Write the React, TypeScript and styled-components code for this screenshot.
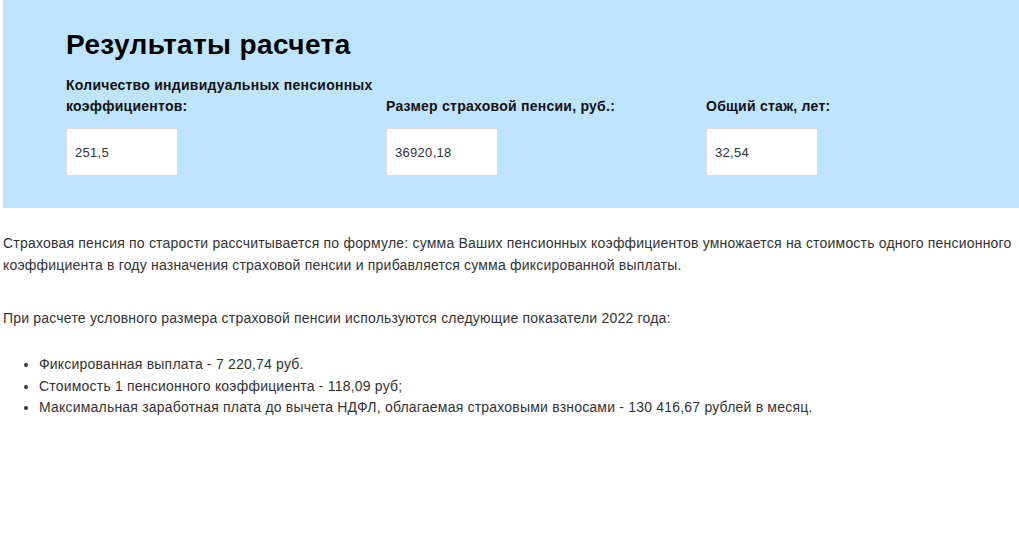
import React from "react";
import styled, { createGlobalStyle } from "styled-components";

const Global = createGlobalStyle`
  html, body { margin: 0; padding: 0; background: #fff; }
  body { font-family: "Liberation Sans", Arial, sans-serif; }
  * { box-sizing: border-box; }
`;

const Page = styled.div`
  padding-left: 3px;
`;

const Panel = styled.section`
  background: #bfe4fe;
  padding: 29px 0 32px 63px;
`;

const Title = styled.h1`
  margin: 0 0 14px;
  font-size: 28px;
  line-height: 32px;
  font-weight: 700;
  letter-spacing: 0.4px;
  color: #000;
`;

const Fields = styled.div`
  display: flex;
  align-items: flex-end;
`;

const Field = styled.div`
  flex: 0 0 320px;
  width: 320px;
  padding-right: 10px;
  display: flex;
  flex-direction: column;
`;

const Label = styled.label`
  font-size: 14px;
  line-height: 21px;
  font-weight: 700;
  letter-spacing: 0.25px;
  color: #111;
  margin-bottom: 11px;
`;

const Value = styled.div`
  width: 112px;
  height: 48px;
  background: #fff;
  border: 1px solid #dcdcdc;
  padding-left: 8px;
  display: flex;
  align-items: center;
  font-size: 13px;
  letter-spacing: 0.3px;
  color: #333;
`;

const Text = styled.p<{ $top?: number }>`
  margin: ${(p) => p.$top ?? 0}px 0 0;
  font-size: 14px;
  line-height: 22px;
  letter-spacing: 0.2px;
  color: #333;
`;

const List = styled.ul`
  margin: 25px 0 0;
  padding-left: 36px;
  font-size: 14px;
  line-height: 21.5px;
  letter-spacing: 0.2px;
  color: #333;
`;

const Item = styled.li``;

export default function App() {
  return (
    <Page>
      <Global />
      <Panel>
        <Title>Результаты расчета</Title>
        <Fields>
          <Field>
            <Label>Количество индивидуальных пенсионных коэффициентов:</Label>
            <Value>251,5</Value>
          </Field>
          <Field>
            <Label>Размер страховой пенсии, руб.:</Label>
            <Value>36920,18</Value>
          </Field>
          <Field>
            <Label>Общий стаж, лет:</Label>
            <Value>32,54</Value>
          </Field>
        </Fields>
      </Panel>
      <Text $top={24}>
        Страховая пенсия по старости рассчитывается по формуле: сумма Ваших пенсионных коэффициентов
        умножается на стоимость одного пенсионного коэффициента в году назначения страховой пенсии и
        прибавляется сумма фиксированной выплаты.
      </Text>
      <Text $top={31}>
        При расчете условного размера страховой пенсии используются следующие показатели 2022 года:
      </Text>
      <List>
        <Item>Фиксированная выплата - 7 220,74 руб.</Item>
        <Item>Стоимость 1 пенсионного коэффициента - 118,09 руб;</Item>
        <Item>
          Максимальная заработная плата до вычета НДФЛ, облагаемая страховыми взносами - 130 416,67
          рублей в месяц.
        </Item>
      </List>
    </Page>
  );
}
